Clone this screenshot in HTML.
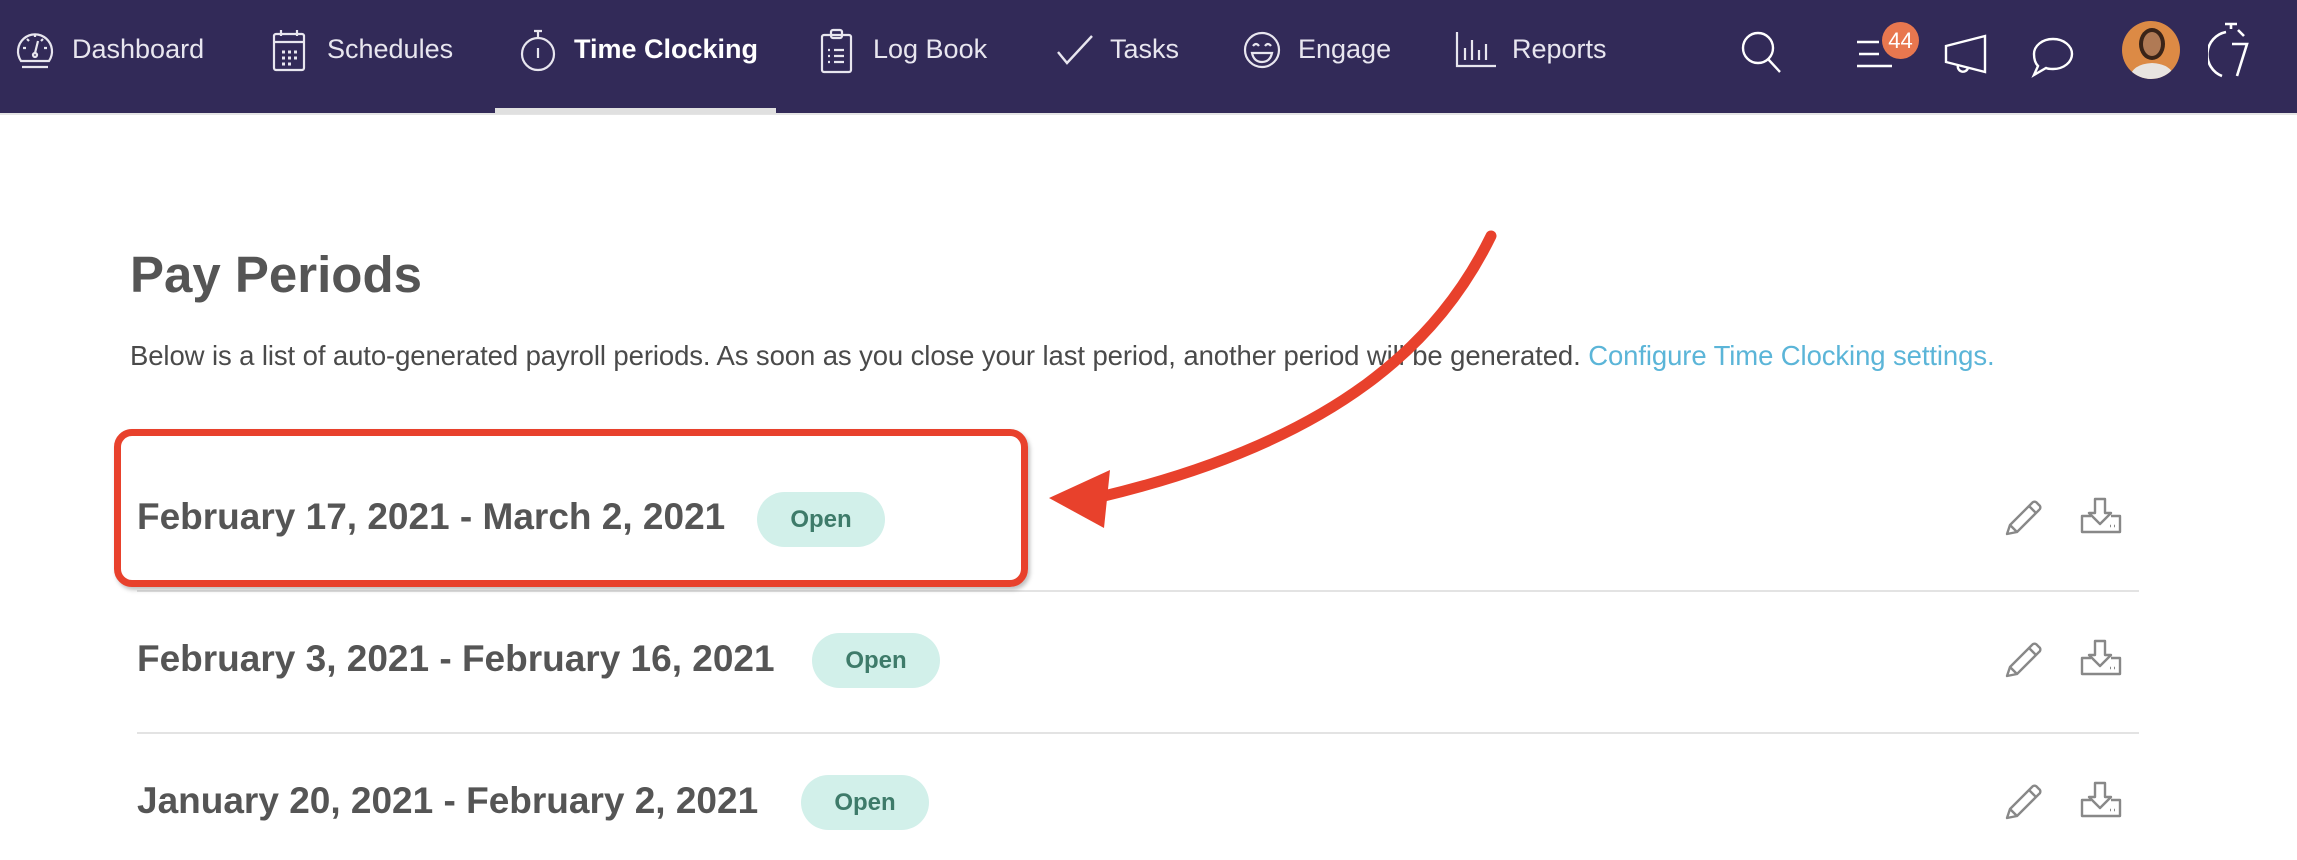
<!DOCTYPE html>
<html><head><meta charset="utf-8"><style>
*{margin:0;padding:0;box-sizing:border-box}
body{width:2297px;height:860px;overflow:hidden;background:#fff;font-family:"Liberation Sans",sans-serif;position:relative}
.nav{position:absolute;left:0;top:0;width:2297px;height:113px;background:#322a58}
.navline{position:absolute;left:0;top:113px;width:2297px;height:2px;background:#e4e4e4}
.act{position:absolute;left:495px;top:108px;width:281px;height:6px;background:#e0e0e0}
.ni{position:absolute;top:33px;color:#e8e6ef;font-size:27px;line-height:32px}
.ic{position:absolute}
.t{position:absolute;color:#555;font-weight:bold}
.badge{position:absolute;height:55px;border-radius:28px;background:#d2f0ea;color:#3e7b6a;font-weight:bold;font-size:24px;line-height:55px;text-align:center}
.sep{position:absolute;left:137px;width:2002px;height:2px;background:#e3e3e3}
</style></head><body>
<div class="nav"></div><div class="navline"></div><div class="act"></div>
<svg class="ic" style="left:14px;top:28px" width="42" height="44" viewBox="0 0 42 44" fill="none" stroke="#e8e6ef" stroke-width="2.2"><path d="M7 33A17 17 0 1 1 35 33Z"/><path d="M8 39h26"/><circle cx="21" cy="27" r="2"/><path d="M21 25l3-12M9 20h3M30 20h3M13 11l2 2M29 11l-2 2M21 6v3"/></svg>
<div class="ni" style="left:72px">Dashboard</div>
<svg class="ic" style="left:272px;top:28px" width="36" height="44" viewBox="0 0 36 44" fill="none" stroke="#e8e6ef" stroke-width="2.2"><rect x="2" y="6" width="30" height="36" rx="2"/><path d="M2 14h30M9 2v6M25 2v6"/><path d="M10 24h3M16 24h3M22 24h3M10 30h3M16 30h3M22 30h3M10 36h3M16 36h3" stroke-width="3"/></svg>
<div class="ni" style="left:327px">Schedules</div>
<svg class="ic" style="left:518px;top:28px" width="40" height="46" viewBox="0 0 40 46" fill="none" stroke="#e8e6ef" stroke-width="2.2"><circle cx="20" cy="26" r="16"/><path d="M20 10V4M16 3h8M20 20v10"/></svg>
<div class="ni" style="left:574px;color:#fff;font-weight:bold">Time Clocking</div>
<svg class="ic" style="left:820px;top:28px" width="34" height="46" viewBox="0 0 34 46" fill="none" stroke="#e8e6ef" stroke-width="2.2"><rect x="2" y="7" width="29" height="37" rx="2"/><rect x="11" y="2" width="11" height="8" rx="2"/><path d="M8 22h2M14 22h10M8 28h2M14 28h10M8 34h2M14 34h10"/></svg>
<div class="ni" style="left:873px">Log Book</div>
<svg class="ic" style="left:1056px;top:34px" width="38" height="32" viewBox="0 0 38 32" fill="none" stroke="#e8e6ef" stroke-width="2.4"><path d="M2 18l9 11L36 2"/></svg>
<div class="ni" style="left:1110px">Tasks</div>
<svg class="ic" style="left:1242px;top:30px" width="40" height="40" viewBox="0 0 40 40" fill="none" stroke="#e8e6ef" stroke-width="2.2"><circle cx="20" cy="20" r="17"/><path d="M11 16q3-4 6 0M23 16q3-4 6 0M10 23h20q-2 9-10 9t-10-9z"/></svg>
<div class="ni" style="left:1298px">Engage</div>
<svg class="ic" style="left:1455px;top:30px" width="42" height="38" viewBox="0 0 42 38" fill="none" stroke="#e8e6ef" stroke-width="2.2"><path d="M2 2v34h39M10 30V18M17 30V10M24 30V20M31 30V14"/></svg>
<div class="ni" style="left:1512px">Reports</div>
<svg class="ic" style="left:1740px;top:30px" width="44" height="44" viewBox="0 0 44 44" fill="none" stroke="#fff" stroke-width="2.4"><circle cx="18" cy="18" r="15"/><path d="M28 29l12 13"/></svg>
<svg class="ic" style="left:1855px;top:36px" width="40" height="36" viewBox="0 0 40 36" fill="none" stroke="#fff" stroke-width="2.4"><path d="M2 6h22M4 18h20M2 30h35"/></svg>
<div style="position:absolute;left:1882px;top:22px;width:37px;height:37px;border-radius:50%;background:#e8774f;color:#fff;font-size:22px;line-height:37px;text-align:center">44</div>
<svg class="ic" style="left:1944px;top:34px" width="44" height="40" viewBox="0 0 44 40" fill="none" stroke="#fff" stroke-width="2.4"><path d="M2 12l39-10v36L2 28zM2 12v16M14 31a5 5 0 0 0 10 3"/></svg>
<svg class="ic" style="left:2031px;top:36px" width="44" height="42" viewBox="0 0 44 42" fill="none" stroke="#fff" stroke-width="2.4"><path d="M22 3c11 0 19 7 19 15s-8 15-19 15c-3 0-5 0-7-1L3 39l4-9C4 27 3 23 3 18 3 10 11 3 22 3z"/></svg>
<svg class="ic" style="left:2121px;top:20px" width="60" height="60" viewBox="0 0 60 60"><defs><clipPath id="c"><circle cx="30" cy="30" r="29"/></clipPath></defs><circle cx="30" cy="30" r="29" fill="#dc8a45"/><g clip-path="url(#c)"><ellipse cx="31" cy="24" rx="13" ry="16" fill="#3a2418"/><ellipse cx="31" cy="24" rx="9" ry="12" fill="#b07a55"/><path d="M8 60q2-16 23-17q21 1 23 17z" fill="#e8e4e0"/></g></svg>
<svg class="ic" style="left:2208px;top:20px" width="50" height="60" viewBox="0 0 50 60" fill="none" stroke="#fff" stroke-width="2.6"><path d="M17 4h12M23 4v5M14 56A23 23 0 0 1 18 12M30 10l6 6M24 24h15L29 56"/></svg>

<div class="t" style="left:130px;top:245px;font-size:51px;line-height:60px">Pay Periods</div>
<div style="position:absolute;left:130px;top:340px;font-size:27.5px;line-height:32px;color:#4a4a4a;white-space:nowrap;letter-spacing:-0.1px">Below is a list of auto-generated payroll periods. As soon as you close your last period, another period will be generated. <span style="color:#5bb5d8">Configure Time Clocking settings.</span></div>

<div class="t" style="left:137px;top:495px;font-size:37px;line-height:44px;white-space:nowrap">February 17, 2021 - March 2, 2021</div>
<div class="badge" style="left:757px;top:492px;width:128px">Open</div>
<div class="sep" style="top:590px"></div>
<div class="t" style="left:137px;top:637px;font-size:37px;line-height:44px;white-space:nowrap">February 3, 2021 - February 16, 2021</div>
<div class="badge" style="left:812px;top:633px;width:128px">Open</div>
<div class="sep" style="top:732px"></div>
<div class="t" style="left:137px;top:779px;font-size:37px;line-height:44px;white-space:nowrap">January 20, 2021 - February 2, 2021</div>
<div class="badge" style="left:801px;top:775px;width:128px">Open</div>

<svg width="0" height="0" style="position:absolute"><defs>
<g id="pen" fill="none" stroke="#888" stroke-width="2.4" stroke-linejoin="round"><path d="M6 38l3-9L31 7a3 3 0 0 1 5 0l2 2a3 3 0 0 1 0 5L16 36z M28 10l7 7 M9 29l7 7"/></g>
<g id="dl" fill="none" stroke="#888" stroke-width="2.4" stroke-linejoin="round"><path d="M15 3h10v14h6L20 28 9 17h6z M11 20H2v16h38V20h-9"/><path d="M30 30h1M34 30h1" stroke-width="2.5"/></g>
</defs></svg>
<svg class="ic" style="left:2001px;top:496px" width="44" height="44"><use href="#pen"/></svg>
<svg class="ic" style="left:2080px;top:496px" width="44" height="44"><use href="#dl"/></svg>
<svg class="ic" style="left:2001px;top:638px" width="44" height="44"><use href="#pen"/></svg>
<svg class="ic" style="left:2080px;top:638px" width="44" height="44"><use href="#dl"/></svg>
<svg class="ic" style="left:2001px;top:780px" width="44" height="44"><use href="#pen"/></svg>
<svg class="ic" style="left:2080px;top:780px" width="44" height="44"><use href="#dl"/></svg>

<div style="position:absolute;left:114px;top:429px;width:914px;height:158px;border:7px solid #e8412c;border-radius:18px;box-shadow:2px 3px 4px rgba(0,0,0,.25)"></div>
<svg class="ic" style="left:0;top:0" width="2297" height="860"><path d="M1491 236C1440 340 1340 440 1100 497" fill="none" stroke="#e8412c" stroke-width="11" stroke-linecap="round"/><path d="M1049 498L1110 470L1104 528Z" fill="#e8412c"/></svg>
</body></html>
